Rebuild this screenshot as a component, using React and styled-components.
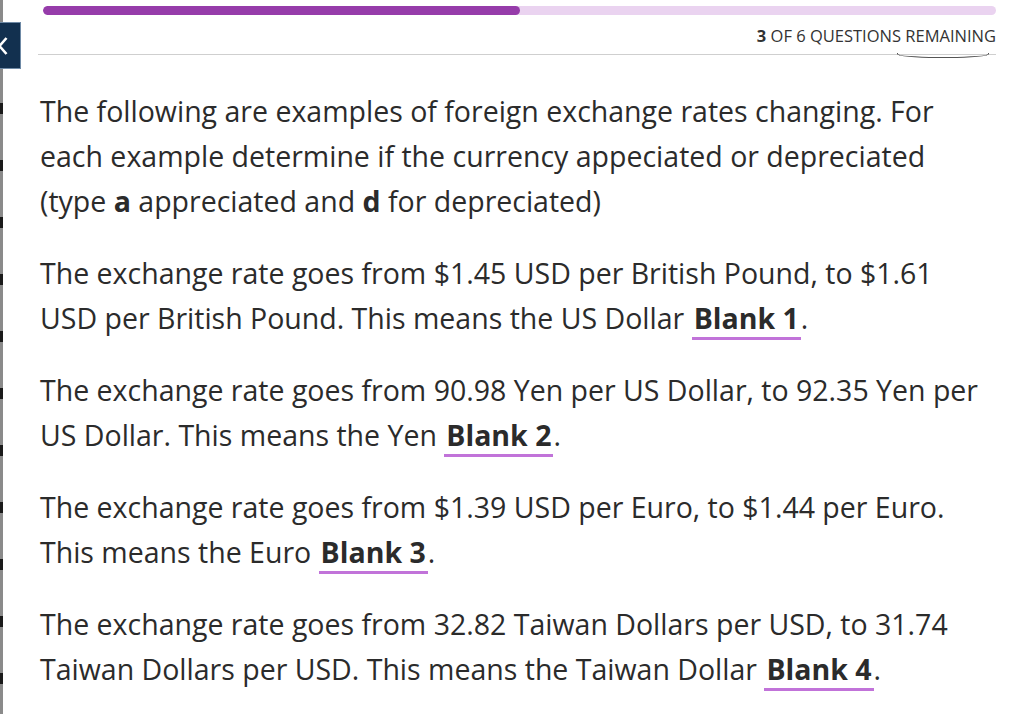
import React from "react";
import styled, { createGlobalStyle } from "styled-components";

const GlobalStyle = createGlobalStyle`
  html, body {
    margin: 0;
    padding: 0;
    background: #fff;
    font-family: "Open Sans", "Liberation Sans", sans-serif;
    color: #2b2b2b;
  }
`;

const Page = styled.div`
  display: flex;
  width: 1024px;
  height: 714px;
  overflow: hidden;
  position: relative;
`;

const Rail = styled.div`
  width: 3px;
  flex: none;
  background: repeating-linear-gradient(
    to bottom,
    #8a8a8a 0px,
    #8a8a8a 46px,
    #1a1a1a 46px,
    #1a1a1a 57px
  );
`;

const BackButton = styled.button`
  position: absolute;
  left: 0;
  top: 22px;
  width: 21px;
  height: 47px;
  padding: 0;
  border: 1px solid #6f8aa6;
  border-left: none;
  background: #12304f;
  display: flex;
  align-items: center;
  justify-content: flex-start;
  overflow: hidden;
  cursor: pointer;
`;

const Main = styled.div`
  flex: 1;
  padding: 0 28px 0 35px;
  display: flex;
  flex-direction: column;
`;

const Header = styled.div`
  padding-top: 6px;
  border-bottom: 1px solid #cfcfcf;
  position: relative;
`;

const Track = styled.div`
  height: 9px;
  margin-left: 5px;
  border-radius: 5px;
  background: #ead3f0;
  overflow: hidden;
`;

const Fill = styled.div`
  height: 100%;
  border-radius: 5px;
  background: #963caa;
`;

const Status = styled.div`
  text-align: right;
  font-size: 16.5px;
  line-height: 22px;
  color: #333;
  padding: 10px 0 7px;

  b {
    font-weight: 700;
  }
`;

const Tab = styled.div`
  position: absolute;
  right: 7px;
  bottom: -4px;
  width: 90px;
  height: 4px;
  border: 1px solid #555;
  border-top: none;
  border-radius: 0 0 40px 40px / 0 0 4px 4px;
`;

const Content = styled.div`
  padding: 34px 10px 0 2px;
`;

const Para = styled.p`
  margin: 0 0 27px;
  font-size: 28.5px;
  line-height: 45px;
  color: #2b2b2b;

  b {
    font-weight: 700;
  }
`;

const Blank = styled.span`
  font-weight: 700;
  padding: 0 2px;
  border-bottom: 3px solid #c173d9;
`;

const questions = [
  <>
    The exchange rate goes from $1.45 USD per British Pound, to $1.61 USD per British Pound. This
    means the US Dollar <Blank>Blank 1</Blank>.
  </>,
  <>
    The exchange rate goes from 90.98 Yen per US Dollar, to 92.35 Yen per US Dollar. This means the
    Yen <Blank>Blank 2</Blank>.
  </>,
  <>
    The exchange rate goes from $1.39 USD per Euro, to $1.44 per Euro. This means the Euro{" "}
    <Blank>Blank 3</Blank>.
  </>,
  <>
    The exchange rate goes from 32.82 Taiwan Dollars per USD, to 31.74 Taiwan Dollars per USD. This
    means the Taiwan Dollar <Blank>Blank 4</Blank>.
  </>,
];

export default function App() {
  const progress = 50;
  return (
    <Page>
      <GlobalStyle />
      <Rail />
      <BackButton aria-label="Back">
        <svg width="12" height="20" viewBox="0 0 12 20" style={{ marginLeft: -3 }}>
          <path d="M9.5 2 L2.5 10 L9.5 18" fill="none" stroke="#fff" strokeWidth="2.6" />
        </svg>
      </BackButton>
      <Main>
        <Header>
          <Track>
            <Fill style={{ width: `${progress}%` }} />
          </Track>
          <Status>
            <b>3</b> OF 6 QUESTIONS REMAINING
          </Status>
          <Tab />
        </Header>
        <Content>
          <Para>
            The following are examples of foreign exchange rates changing. For each example
            determine if the currency appeciated or depreciated (type <b>a</b> appreciated and{" "}
            <b>d</b> for depreciated)
          </Para>
          {questions.map((q, i) => (
            <Para key={i}>{q}</Para>
          ))}
        </Content>
      </Main>
    </Page>
  );
}
